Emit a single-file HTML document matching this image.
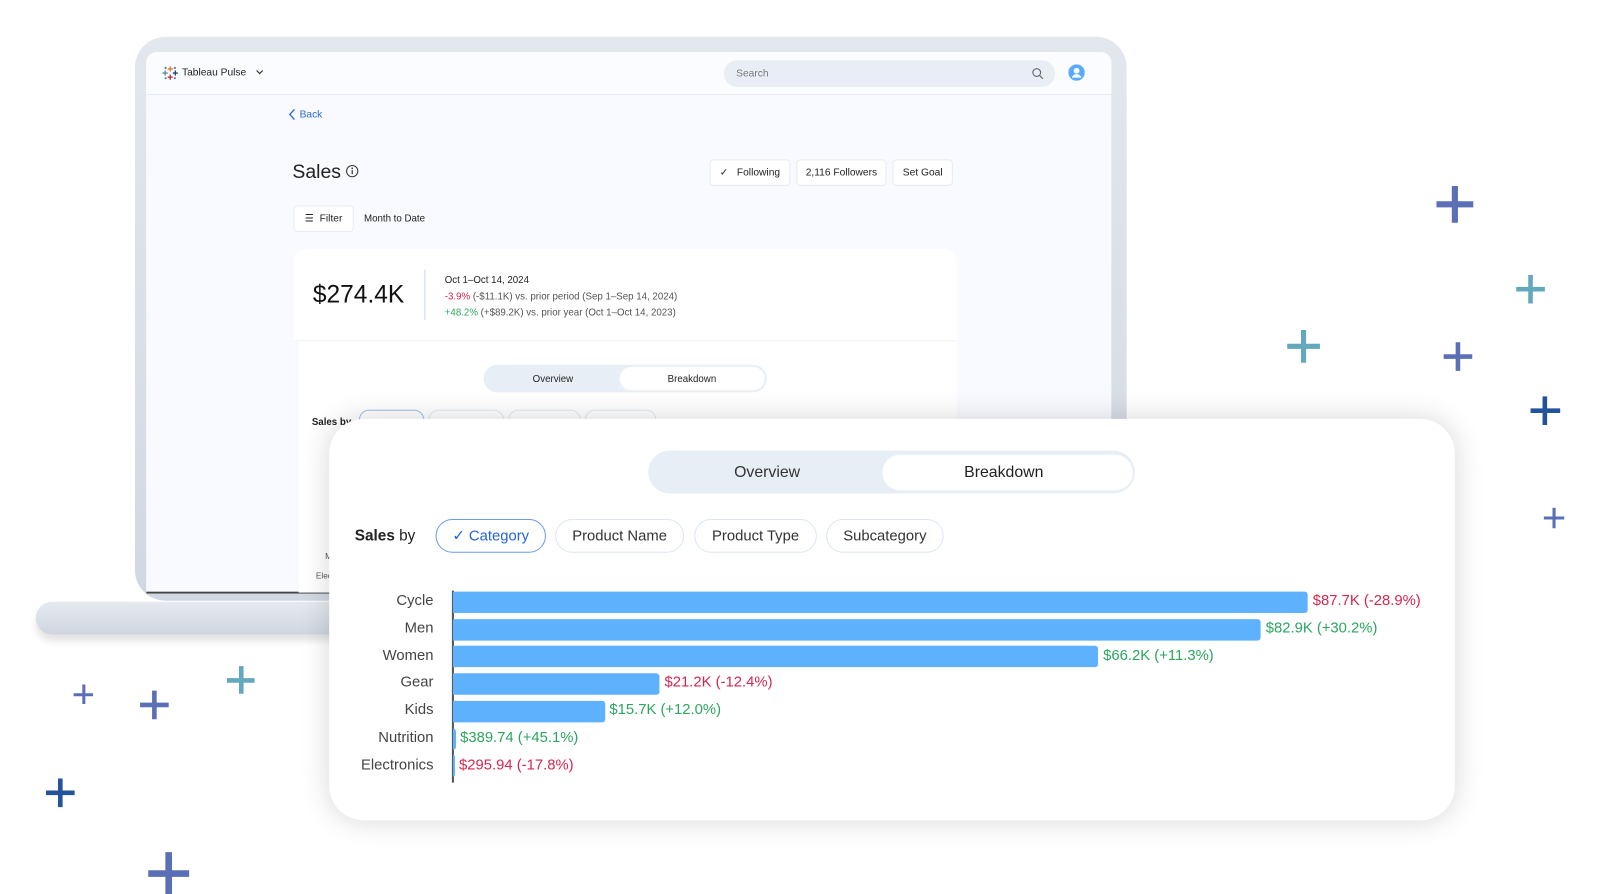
<!DOCTYPE html>
<html><head><meta charset="utf-8"><style>
*{margin:0;padding:0;box-sizing:border-box}
html,body{width:1600px;height:894px;overflow:hidden;background:#fff;font-family:"Liberation Sans",sans-serif}
#w{position:absolute;left:0;top:0;width:1565px;height:875px;transform:scale(1.0224,1.0217);transform-origin:0 0}
.a{position:absolute}
.t{color:#222;white-space:nowrap}
.btn{position:absolute;background:#fff;border:1px solid #e6ebf3;border-radius:4px;font-size:10px;color:#222;display:flex;align-items:center;justify-content:center}
.chip{position:absolute;top:508px;height:33px;border:1px solid #dbe6f6;border-radius:17px;font-size:14.5px;color:#333;display:flex;align-items:center;justify-content:center}
.lbl{position:absolute;right:1141px;font-size:14.5px;color:#444;text-align:right}
.bar{position:absolute;left:443px;height:21px;background:#5eb1fd;border-radius:0 3px 3px 0}
.v{position:absolute;font-size:14.5px}
.r{color:#d6264f}.g{color:#2aa65f}
</style></head><body><div id="w">

<div class="a" style="left:35px;top:589px;width:320px;height:32px;border-radius:16px;background:linear-gradient(#e6eaf0,#cfd6e0);box-shadow:0 6px 8px rgba(0,0,0,.12)"></div>
<div class="a" style="left:132px;top:36px;width:970px;height:552px;border-radius:30px;background:linear-gradient(#e3e7ee,#d2d8e2)"></div>
<div class="a" style="left:143px;top:51px;width:944px;height:530px;border-radius:10px 10px 0 0;background:#f8faff;border-bottom:2px solid #444"></div>
<div class="a" style="left:143px;top:51px;width:944px;height:42px;background:#fafcff;border-bottom:1px solid #e5ecf5;border-radius:10px 10px 0 0"></div>
<svg class="a" style="left:159px;top:64px" width="15" height="15" viewBox="0 0 15 15"><g stroke-width="1.3"><path d="M7.5 1v5M5 3.5h5" stroke="#e8762d"/><path d="M7.5 9v5M5 11.5h5" stroke="#c72037"/><path d="M2.5 5v5M0 7.5h5" stroke="#5b879b"/><path d="M12.5 5v5M10 7.5h5" stroke="#1f457e"/><path d="M3 1.5v2M2 2.5h2M12 1.5v2M11 2.5h2M3 11.5v2M2 12.5h2M12 11.5v2M11 12.5h2" stroke="#59879b"/></g></svg>
<div class="a t" style="left:178px;top:66px;font-size:10px">Tableau Pulse</div>
<svg class="a" style="left:250px;top:68px" width="8" height="6"><path d="M1 1l3 3 3-3" stroke="#333" fill="none" stroke-width="1.2"/></svg>
<div class="a" style="left:708px;top:59px;width:324px;height:26px;border-radius:13px;background:#e9eef6"></div>
<div class="a" style="left:720px;top:67px;font-size:10px;color:#777">Search</div>
<svg class="a" style="left:1009px;top:66px" width="12" height="12"><circle cx="5" cy="5" r="3.8" stroke="#666" fill="none" stroke-width="1.1"/><path d="M8 8l3 3" stroke="#666" stroke-width="1.1"/></svg>
<svg class="a" style="left:1045px;top:63px" width="16" height="16"><circle cx="8" cy="8" r="8" fill="#58a9ff"/><circle cx="8" cy="6.2" r="2.8" fill="#fff"/><path d="M3.2 13c1-2.5 2.8-3.5 4.8-3.5s3.8 1 4.8 3.5" fill="#fff"/></svg>
<svg class="a" style="left:282px;top:106px" width="8" height="12"><path d="M6 1L1.5 6 6 11" stroke="#2e6ad1" fill="none" stroke-width="1.3"/></svg>
<div class="a" style="left:293px;top:107px;font-size:10px;color:#2e6ad1">Back</div>
<div class="a t" style="left:286px;top:158px;font-size:19px">Sales</div>
<svg class="a" style="left:338px;top:161px" width="13" height="13"><circle cx="6.5" cy="6.5" r="5.5" stroke="#333" fill="none"/><path d="M6.5 5.5v4" stroke="#333" stroke-width="1.2"/><circle cx="6.5" cy="3.8" r=".8" fill="#333"/></svg>
<div class="btn" style="left:694px;top:156px;width:79px;height:26px">✓&nbsp;&nbsp; Following</div>
<div class="btn" style="left:779px;top:156px;width:88px;height:26px">2,116 Followers</div>
<div class="btn" style="left:873px;top:156px;width:59px;height:26px">Set Goal</div>
<div class="btn" style="left:287px;top:201px;width:59px;height:26px">☰&nbsp; Filter</div>
<div class="a t" style="left:356px;top:209px;font-size:9.5px">Month to Date</div>
<div class="a" style="left:292px;top:334px;width:644px;height:246px;background:#fff"></div>
<div class="a" style="left:287px;top:244px;width:649px;height:90px;background:#fff;border-radius:12px 12px 0 0;border-bottom:1px solid #edf1f7;overflow:hidden"></div>
<div class="a t" style="left:306px;top:275px;font-size:24px;color:#111">$274.4K</div>
<div class="a" style="left:415px;top:264px;width:1px;height:49px;background:#c8d8ef"></div>
<div class="a t" style="left:435px;top:267px;font-size:9.5px;line-height:16px;color:#555"><span style="color:#222">Oct 1–Oct 14, 2024</span><br><span class="r">-3.9%</span> (-$11.1K) vs. prior period (Sep 1–Sep 14, 2024)<br><span class="g">+48.2%</span> (+$89.2K) vs. prior year (Oct 1–Oct 14, 2023)</div>
<div class="a" style="left:473px;top:357px;width:277px;height:27px;border-radius:14px;background:#e8eef5"></div>
<div class="a" style="left:606px;top:359px;width:142px;height:23px;border-radius:12px;background:#fff"></div>
<div class="a t" style="left:521px;top:366px;font-size:9.5px">Overview</div>
<div class="a t" style="left:653px;top:366px;font-size:9.5px">Breakdown</div>
<div class="a t" style="left:305px;top:408px;font-size:9.5px;font-weight:bold">Sales by</div>
<div class="a" style="left:351px;top:401px;width:64px;height:20px;border:1px solid #9bbcf0;border-radius:10px"></div>
<div class="a" style="left:419px;top:401px;width:74px;height:20px;border:1px solid #e0e8f4;border-radius:10px"></div>
<div class="a" style="left:497px;top:401px;width:71px;height:20px;border:1px solid #e0e8f4;border-radius:10px"></div>
<div class="a" style="left:572px;top:401px;width:70px;height:20px;border:1px solid #e0e8f4;border-radius:10px"></div>
<div class="a t" style="left:318px;top:540px;font-size:8px;color:#555">M</div>
<div class="a t" style="left:309px;top:559px;font-size:8px;color:#555">Electronics</div>

<div class="a" style="left:322px;top:410px;width:1101px;height:393px;border-radius:34px;background:#fff;box-shadow:0 0 28px rgba(0,0,0,.16)"></div>
<div class="a" style="left:634px;top:441px;width:476px;height:42px;border-radius:21px;background:#e8eef5"></div>
<div class="a" style="left:863px;top:445px;width:245px;height:35px;border-radius:18px;background:#fff"></div>
<div class="a t" style="left:718px;top:454px;font-size:15.5px;color:#333">Overview</div>
<div class="a t" style="left:943px;top:454px;font-size:15.5px;color:#222">Breakdown</div>
<div class="a t" style="left:347px;top:516px;font-size:15px"><b>Sales</b> by</div>
<div class="chip" style="left:426px;width:108px;border-color:#6c9be8;color:#2563d8">✓&nbsp;Category</div>
<div class="chip" style="left:543px;width:126px">Product Name</div>
<div class="chip" style="left:679px;width:120px">Product Type</div>
<div class="chip" style="left:808px;width:115px">Subcategory</div>

<div class="a" style="left:442px;top:578px;width:1.5px;height:188px;background:#555"></div>
<div class="lbl" style="top:580px">Cycle</div><div class="bar" style="top:579px;width:836px"></div><div class="v r" style="left:1284px;top:580px">$87.7K (-28.9%)</div>
<div class="lbl" style="top:607px">Men</div><div class="bar" style="top:606px;width:790px"></div><div class="v g" style="left:1238px;top:607px">$82.9K (+30.2%)</div>
<div class="lbl" style="top:634px">Women</div><div class="bar" style="top:632px;width:631px"></div><div class="v g" style="left:1079px;top:634px">$66.2K (+11.3%)</div>
<div class="lbl" style="top:660px">Gear</div><div class="bar" style="top:659px;width:202px"></div><div class="v r" style="left:650px;top:660px">$21.2K (-12.4%)</div>
<div class="lbl" style="top:687px">Kids</div><div class="bar" style="top:686px;width:149px"></div><div class="v g" style="left:596px;top:687px">$15.7K (+12.0%)</div>
<div class="lbl" style="top:714px">Nutrition</div><div class="bar" style="top:713px;width:3px"></div><div class="v g" style="left:450px;top:714px">$389.74 (+45.1%)</div>
<div class="lbl" style="top:741px">Electronics</div><div class="bar" style="top:739px;width:2px"></div><div class="v r" style="left:449px;top:741px">$295.94 (-17.8%)</div>

<svg class="a" style="left:0;top:0" width="1565" height="875">
<g stroke-linecap="butt">
<path d="M1405 200h36M1423 182v36" stroke="#5a6fb5" stroke-width="6"/>
<path d="M1483 283h28M1497 269v28" stroke="#63a8bd" stroke-width="4.5"/>
<path d="M1259 339h32M1275 323v32" stroke="#63a8bd" stroke-width="5"/>
<path d="M1412 349h28M1426 335v28" stroke="#5a6fb5" stroke-width="4.5"/>
<path d="M1497 402h29M1511 388v28" stroke="#23539b" stroke-width="4.5"/>
<path d="M1510 507h20M1520 497v20" stroke="#5a6fb5" stroke-width="3"/>
<path d="M72 680h19M82 670v19" stroke="#5a6fb5" stroke-width="3"/>
<path d="M137 690h28M151 676v28" stroke="#5a6fb5" stroke-width="4.5"/>
<path d="M222 666h27M236 652v27" stroke="#63a8bd" stroke-width="4.5"/>
<path d="M45 776h28M59 762v28" stroke="#23539b" stroke-width="4.5"/>
<path d="M145 855h40M165 834v41" stroke="#5a6fb5" stroke-width="6.5"/>
</g></svg>
</div></body></html>
